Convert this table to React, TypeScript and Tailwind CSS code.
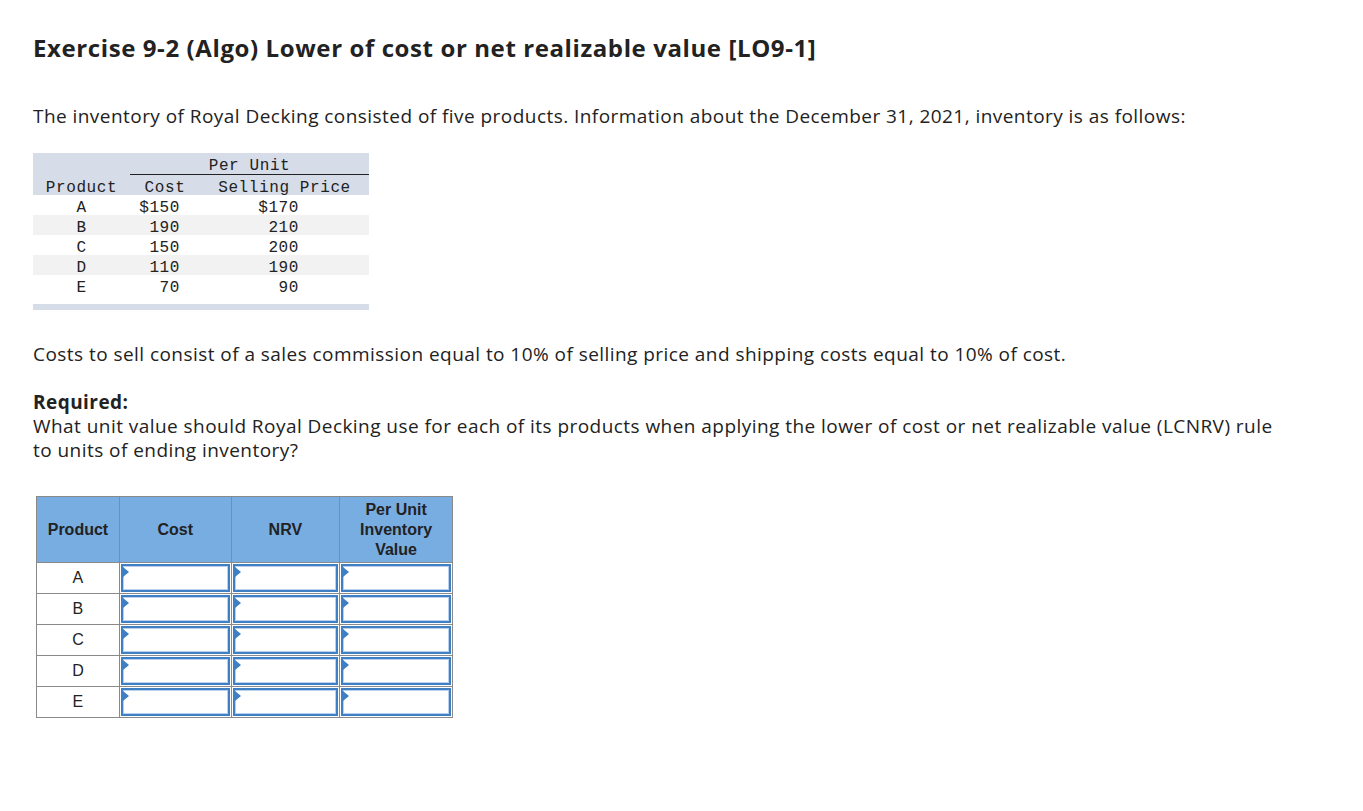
const ROWS = [
  { p: "A", cost: "$150", sell: "$170" },
  { p: "B", cost: "190", sell: "210" },
  { p: "C", cost: "150", sell: "200" },
  { p: "D", cost: "110", sell: "190" },
  { p: "E", cost: "70", sell: "90" },
];

const InputCell = () => (
  <td className="border border-[#8a8a8a] p-px h-[30px]">
    <div className="relative h-[28px] border-2 border-[#3f7fc4] bg-white shadow-[inset_0_0_0_1px_#b8d2ee]">
      <svg className="absolute left-0 top-px" width="6" height="10" viewBox="0 0 6 10">
        <path d="M0 0 L6 5 L0 10 Z" fill="#3f7fc4" />
      </svg>
    </div>
  </td>
);

export default function App() {
  return (
    <div className="bg-white text-[#222] px-[33px] pt-[33px] pb-10" style={{ fontFamily: "'Open Sans', sans-serif" }}>
      <h1 className="text-[24px] font-bold leading-[30px] tracking-[0.6px]">
        Exercise 9-2 (Algo) Lower of cost or net realizable value [LO9-1]
      </h1>

      <p className="mt-[41px] text-[19px] leading-[24px] tracking-[0.45px]">
        The inventory of Royal Decking consisted of five products. Information about the December 31, 2021, inventory is as follows:
      </p>

      <table
        className="mt-[25px] w-[336px] border-collapse text-[16px] leading-[14px] tracking-[0.6px] text-[#222]"
        style={{ fontFamily: "'Liberation Mono', 'Courier New', monospace" }}
      >
        <colgroup>
          <col className="w-[97px]" />
          <col className="w-[70px]" />
          <col className="w-[169px]" />
        </colgroup>
        <thead className="bg-[#d6dde8]">
          <tr className="h-[21px]">
            <th />
            <th colSpan={2} className="pt-[6px] font-normal text-center border-b border-[#222]">Per Unit</th>
          </tr>
          <tr className="h-[21px]">
            <th className="pt-[6px] font-normal text-center">Product</th>
            <th className="pt-[6px] font-normal text-center">Cost</th>
            <th className="pt-[6px] font-normal text-center">Selling Price</th>
          </tr>
        </thead>
        <tbody>
          {ROWS.map((r, i) => (
            <tr key={r.p} className={`h-[20px] ${i % 2 === 1 ? "bg-[#f2f2f2]" : "bg-white"}`}>
              <td className="pt-[6px] text-center">{r.p}</td>
              <td className="pt-[6px] text-right pr-[20px]">{r.cost}</td>
              <td className="pt-[6px] text-right pr-[70px]">{r.sell}</td>
            </tr>
          ))}
          <tr className="h-[9px]">
            <td colSpan={3} />
          </tr>
          <tr className="h-[6px] bg-[#d6dde8]">
            <td colSpan={3} />
          </tr>
        </tbody>
      </table>

      <p className="mt-[32px] text-[19px] leading-[24px] tracking-[0.45px]">
        Costs to sell consist of a sales commission equal to 10% of selling price and shipping costs equal to 10% of cost.
      </p>

      <p className="mt-[24px] text-[19px] leading-[24px] tracking-[0.45px] font-bold">Required:</p>
      <p className="text-[19px] leading-[24px] tracking-[0.45px] max-w-[1260px]">
        What unit value should Royal Decking use for each of its products when applying the lower of cost or net realizable value (LCNRV) rule to units of ending inventory?
      </p>

      <table
        className="ml-[3px] mt-[34px] w-[417px] border-collapse text-[16px] text-[#222]"
        style={{ fontFamily: "'Liberation Sans', Arial, sans-serif" }}
      >
        <colgroup>
          <col className="w-[83px]" />
          <col className="w-[112px]" />
          <col className="w-[109px]" />
          <col className="w-[113px]" />
        </colgroup>
        <thead>
          <tr className="h-[66px] bg-[#78ade2]">
            <th className="border border-[#8a8a8a] font-bold">Product</th>
            <th className="border border-[#8a8a8a] font-bold">Cost</th>
            <th className="border border-[#8a8a8a] font-bold">NRV</th>
            <th className="border border-[#8a8a8a] font-bold leading-[20px]">
              Per Unit
              <br />
              Inventory
              <br />
              Value
            </th>
          </tr>
        </thead>
        <tbody>
          {ROWS.map((r) => (
            <tr key={r.p}>
              <td className="border border-[#8a8a8a] text-center">{r.p}</td>
              <InputCell />
              <InputCell />
              <InputCell />
            </tr>
          ))}
        </tbody>
      </table>
    </div>
  );
}
